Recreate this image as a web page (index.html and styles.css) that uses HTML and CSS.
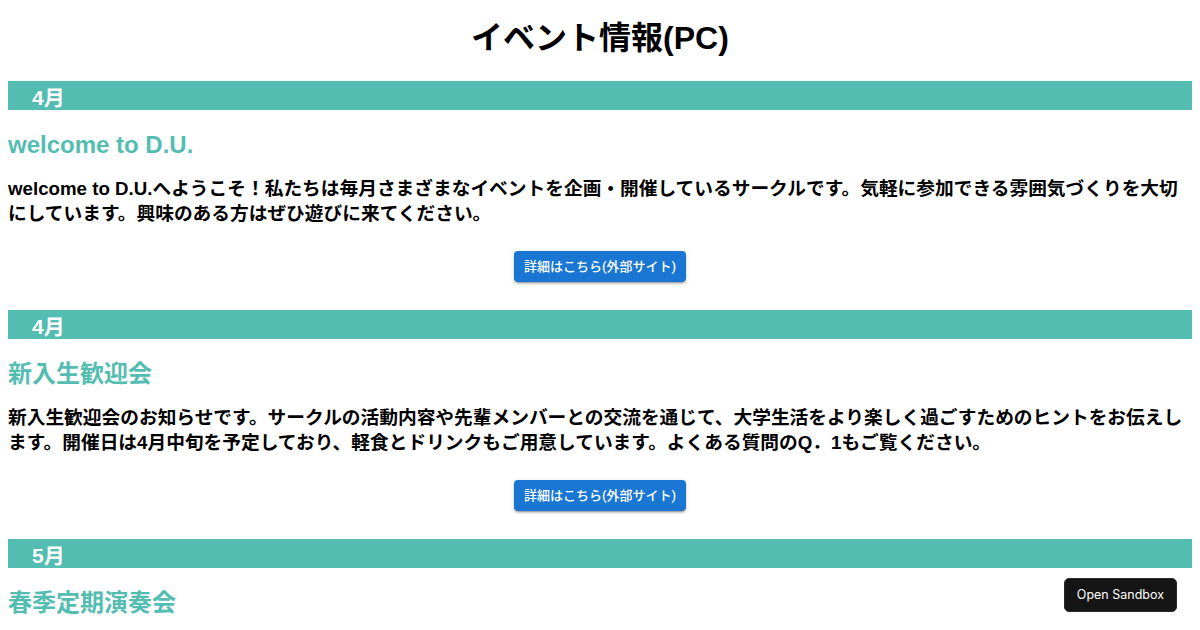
FILE: index.html
```html
<!DOCTYPE html>
<html lang="ja">
<head>
<meta charset="utf-8">
<title>イベント情報(PC)</title>
<link rel="stylesheet" href="styles.css">
</head>
<body>
<div class="page">
  <h1 class="page-title">イベント情報(PC)</h1>

  <section class="month">
    <h2 class="month-bar">4月</h2>
    <h3 class="event-title">welcome to D.U.</h3>
    <p class="event-text">welcome to D.U.へようこそ！私たちは毎月さまざまなイベントを企画・開催しているサークルです。気軽に参加できる雰囲気づくりを大切にしています。興味のある方はぜひ遊びに来てください。</p>
    <div class="event-action"><a class="btn" href="#">詳細はこちら(外部サイト)</a></div>
  </section>

  <section class="month">
    <h2 class="month-bar">4月</h2>
    <h3 class="event-title">新入生歓迎会</h3>
    <p class="event-text">新入生歓迎会のお知らせです。サークルの活動内容や先輩メンバーとの交流を通じて、大学生活をより楽しく過ごすためのヒントをお伝えします。開催日は4月中旬を予定しており、軽食とドリンクもご用意しています。よくある質問のQ．1もご覧ください。</p>
    <div class="event-action"><a class="btn" href="#">詳細はこちら(外部サイト)</a></div>
  </section>

  <section class="month">
    <h2 class="month-bar">5月</h2>
    <h3 class="event-title">春季定期演奏会</h3>
  </section>
</div>

<a class="sandbox-btn" href="#">Open Sandbox</a>
</body>
</html>
```

FILE: styles.css
```css
html, body {
  margin: 0;
  padding: 0;
  background: #ffffff;
}

body {
  font-family: "Liberation Sans", "Noto Sans CJK JP", sans-serif;
  color: #000000;
}

.page {
  padding: 0 8px;
}

.page-title {
  margin: 0 0 24px;
  padding-top: 20px;
  font-size: 32px;
  line-height: 37px;
  font-weight: bold;
  text-align: center;
}

.month {
  display: flex;
  flex-direction: column;
}

.month + .month {
  margin-top: 28px;
}

.month-bar {
  margin: 0;
  height: 29px;
  box-sizing: border-box;
  padding: 5px 0 0 24px;
  font-size: 21px;
  line-height: 23px;
  font-weight: bold;
  color: #ffffff;
  background: #54bdb1;
}

.event-title {
  margin: 21px 0 0;
  font-size: 24px;
  line-height: 28px;
  font-weight: bold;
  color: #54bdb1;
}

.event-text {
  margin: 17px 0 0;
  font-size: 18.72px;
  line-height: 25px;
  font-weight: bold;
}

.event-action {
  margin-top: 25px;
  display: flex;
  justify-content: center;
}

.btn {
  display: inline-block;
  padding: 4px 10px;
  font-family: Roboto, "Noto Sans CJK JP", sans-serif;
  font-size: 13px;
  font-weight: 500;
  line-height: 23px;
  color: #ffffff;
  background: #1976d2;
  border-radius: 4px;
  text-decoration: none;
  box-shadow: 0 3px 1px -2px rgba(0, 0, 0, 0.2),
              0 2px 2px 0 rgba(0, 0, 0, 0.14),
              0 1px 5px 0 rgba(0, 0, 0, 0.12);
}

.sandbox-btn {
  position: fixed;
  right: 23px;
  bottom: 18px;
  height: 34px;
  box-sizing: border-box;
  padding: 0 12px;
  font-family: Inter, "Liberation Sans", sans-serif;
  font-size: 12.5px;
  line-height: 32px;
  color: #ffffff;
  background: #151515;
  border: 1px solid #2a2a2a;
  border-radius: 5px;
  text-decoration: none;
}
```
